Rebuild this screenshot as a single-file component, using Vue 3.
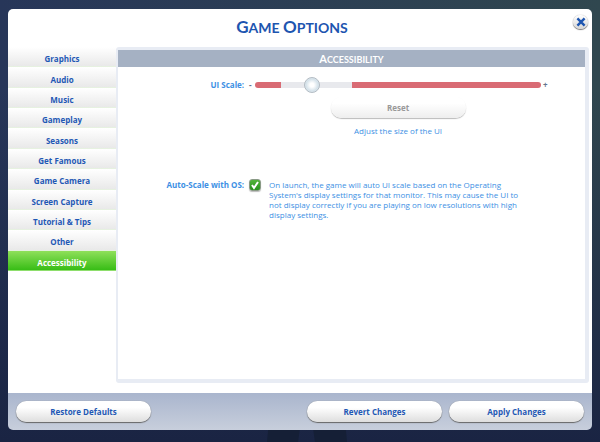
<script setup>
import { ref } from 'vue'

const tabs = [
    'Graphics',
    'Audio',
    'Music',
    'Gameplay',
    'Seasons',
    'Get Famous',
    'Game Camera',
    'Screen Capture',
    'Tutorial & Tips',
    'Other',
    'Accessibility',
]
const activeTab = ref('Accessibility')
const uiScale = ref(18)
const autoScale = ref(true)
</script>

<template>
    <div class="screen">
        <svg class="figure" viewBox="0 0 84 42" aria-hidden="true">
            <path d="M4 0H37L31 42H0Z" />
            <path d="M42 0H76L80 42H48Z" />
        </svg>

        <div class="dialog" role="dialog" aria-labelledby="title">
            <header class="head">
                <h1 id="title" class="title">
                    <span class="word">Game</span> <span class="word">Options</span>
                </h1>
                <button class="close" type="button" aria-label="Close">
                    <svg viewBox="0 0 10 10"><path d="M2 2L8 8M8 2L2 8" /></svg>
                </button>
            </header>

            <div class="body">
                <nav class="tabs">
                    <button
                        v-for="tab in tabs"
                        :key="tab"
                        type="button"
                        class="tab"
                        :class="{ active: tab === activeTab }"
                        @click="activeTab = tab"
                    >{{ tab }}</button>
                </nav>

                <main class="panel">
                    <h2 class="panelTitle"><span class="word">Accessibility</span></h2>

                    <div class="setting">
                        <label class="label" for="uiScale">UI Scale:</label>
                        <div class="control">
                            <div class="rangeRow">
                                <span class="sign">-</span>
                                <input id="uiScale" v-model="uiScale" class="range" type="range" min="0" max="100">
                                <span class="sign">+</span>
                            </div>
                            <button class="pill" type="button" disabled>Reset</button>
                            <p class="hint">Adjust the size of the UI</p>
                        </div>
                    </div>

                    <div class="setting">
                        <label class="label" for="autoScale">Auto-Scale with OS:</label>
                        <div class="checkRow">
                            <span class="checkBox">
                                <input id="autoScale" v-model="autoScale" class="check" type="checkbox">
                                <svg v-if="autoScale" class="tick" viewBox="0 0 12 12"><path d="M3 6L5 9L9 3" /></svg>
                            </span>
                            <p class="text">
                                On launch, the game will auto UI scale based on the Operating
                                System's display settings for that monitor. This may cause the UI to
                                not display correctly if you are playing on low resolutions with high
                                display settings.
                            </p>
                        </div>
                    </div>
                </main>
            </div>

            <footer class="foot">
                <button class="pill" type="button">Restore Defaults</button>
                <div class="footRight">
                    <button class="pill" type="button">Revert Changes</button>
                    <button class="pill" type="button">Apply Changes</button>
                </div>
            </footer>
        </div>
    </div>
</template>

<style>
body {
    margin: 0;
}
</style>

<style scoped>
.screen {
    position: relative;
    box-sizing: border-box;
    display: flex;
    min-height: 100vh;
    padding: 9px 8px 12px;
    background:
        linear-gradient(180deg, transparent 20%, #1a2443 100%),
        linear-gradient(90deg, #273659, #30474f);
    font-family: "Open Sans", "Liberation Sans", sans-serif;
    font-size: 8px;
    line-height: 10px;
}
.figure {
    position: absolute;
    bottom: 0;
    left: calc(50% - 33px);
    width: 84px;
    height: 42px;
    fill: #151f36;
}

.dialog {
    position: relative;
    flex: 1;
    display: flex;
    flex-direction: column;
    border-radius: 5px;
    overflow: hidden;
}

.head {
    display: flex;
    align-items: flex-start;
    gap: 5px;
    padding: 6px 4px 0 8px;
    height: 32px;
    background: #fff;
}
.title {
    flex: 1;
    margin: 0;
    color: #1d55b0;
    font-family: Lato, sans-serif;
    font-size: 14px;
    font-weight: 700;
    line-height: 24px;
    text-align: center;
}
.word {
    display: inline-block;
    text-transform: uppercase;
}
.title .word::first-letter {
    font-size: 17px;
}
.close {
    display: grid;
    place-items: center;
    width: 15px;
    height: 14px;
    padding: 0;
    border: 0;
    border-radius: 50%;
    background: linear-gradient(#fff, #d5d5d5);
    box-shadow: 0 1px 1px #777, 0 0 1px #888;
}
.close svg {
    width: 12px;
    height: 12px;
    stroke: #1d55b0;
    stroke-width: 2;
}

.body {
    flex: 1;
    display: flex;
    padding: 0 3px 10px 0;
    background: #fff;
}
.tabs {
    width: 108px;
    height: 224px;
    display: grid;
    grid-auto-rows: 1fr;
}
.tab {
    padding: 5px 0 0;
    border: 0;
    border-bottom: 1px solid #e6f1e0;
    background: linear-gradient(#fff, #e9e9e9);
    color: #1f58b5;
    font: inherit;
    font-weight: 700;
}
.tab.active {
    border-bottom-color: #8ede6c;
    background: linear-gradient(#8fe05a, #38bd16);
    color: #fff;
}

.panel {
    flex: 1;
    border: solid #e8ecf4;
    border-width: 3px 4px 4px 2px;
    border-radius: 3px;
}
.panelTitle {
    height: 17px;
    margin: 0;
    background: #a5b1c3;
    color: #fff;
    font-family: Lato, sans-serif;
    font-size: 9px;
    font-weight: 700;
    line-height: 17px;
    text-align: center;
}
.panelTitle .word::first-letter {
    font-size: 11px;
}

.setting {
    display: grid;
    grid-template-columns: 27% 1fr;
    padding-top: 10px;
    color: #3d90e4;
}
.setting + .setting {
    padding-top: 41px;
}
.label {
    padding-top: 3px;
    font-weight: 700;
    text-align: right;
}
.control {
    display: flex;
    flex-direction: column;
    align-items: center;
    padding: 0 38px 0 5px;
}
.rangeRow {
    align-self: stretch;
    display: flex;
    align-items: center;
    gap: 2px;
    height: 16px;
    margin-bottom: 4px;
}
.sign {
    width: 4px;
    color: #64748c;
    font-weight: 700;
}
.range {
    flex: 1;
    min-width: 0;
    height: 16px;
    margin: 0;
    appearance: none;
    background: none;
}
.range::-webkit-slider-runnable-track {
    height: 6px;
    border-radius: 3px;
    background: linear-gradient(90deg, #d96b74 9%, #e8e9ed 9% 34%, #d96b74 34%);
}
.range::-webkit-slider-thumb {
    appearance: none;
    width: 16px;
    height: 16px;
    margin-top: -5px;
    border: 1px solid #b3bcc4;
    border-radius: 50%;
    background: radial-gradient(#fff 20%, #d5e2ea 60%, #eef2f5);
}
.hint {
    margin: 8px 0 0;
}
.checkRow {
    display: flex;
    gap: 8px;
    padding: 0 56px 0 5px;
}
.checkBox {
    position: relative;
    flex: none;
    width: 12px;
    height: 12px;
    padding-top: 2px;
}
.check {
    display: block;
    width: 12px;
    height: 12px;
    margin: 0;
    appearance: none;
    border: 1px solid #8a9a86;
    border-radius: 3px;
    background: #fff;
    box-shadow: 0 1px 1px #bbb;
}
.check:checked {
    background: linear-gradient(#52b53a, #27911c);
}
.tick {
    position: absolute;
    top: 2px;
    left: 0;
    width: 12px;
    height: 12px;
    fill: none;
    stroke: #fff;
    stroke-width: 2;
    pointer-events: none;
}
.text {
    margin: 0;
    padding-top: 3px;
}

.foot {
    display: flex;
    justify-content: space-between;
    padding: 8px;
    background: linear-gradient(rgba(172, 184, 208, .98), rgba(203, 210, 223, .98));
}
.footRight {
    display: flex;
    gap: 7px;
}
.pill {
    width: 135px;
    height: 21px;
    padding: 0;
    border: 0;
    border-radius: 11px;
    background: linear-gradient(#fff 30%, #dedede);
    box-shadow: 0 1px 1px #666, 0 0 1px #888;
    color: #1f58b5;
    font: inherit;
    font-weight: 700;
}
.pill:disabled {
    background: linear-gradient(#fff 30%, #eee);
    box-shadow: 0 1px 1px #bbb;
    color: #999;
}
</style>
